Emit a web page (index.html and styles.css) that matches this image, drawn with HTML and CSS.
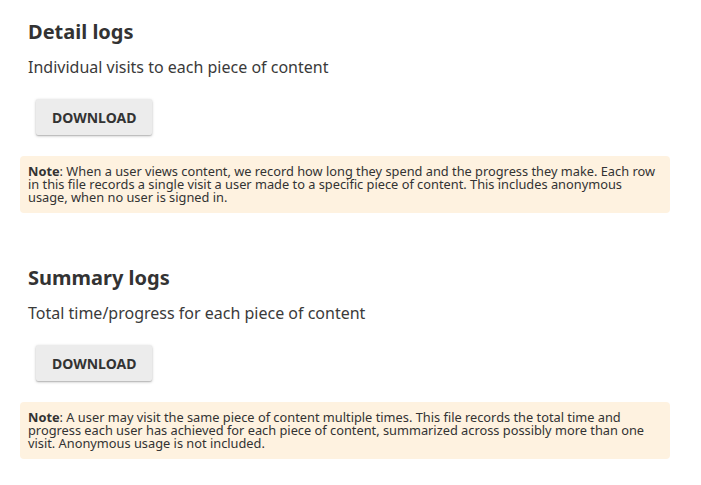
FILE: index.html
```html
<!DOCTYPE html>
<html lang="en">
<head>
<meta charset="utf-8">
<title>Logs</title>
<link rel="stylesheet" href="styles.css">
</head>
<body>
<main class="page">
  <section class="section">
    <h2 class="title">Detail logs</h2>
    <p class="subtitle">Individual visits to each piece of content</p>
    <button class="btn" type="button">Download</button>
    <p class="note"><strong>Note</strong>: When a user views content, we record how long they spend and the progress they make. Each row in this file records a single visit a user made to a specific piece of content. This includes anonymous usage, when no user is signed in.</p>
  </section>
  <section class="section section-second">
    <h2 class="title">Summary logs</h2>
    <p class="subtitle">Total time/progress for each piece of content</p>
    <button class="btn" type="button">Download</button>
    <p class="note"><strong>Note</strong>: A user may visit the same piece of content multiple times. This file records the total time and progress each user has achieved for each piece of content, summarized across possibly more than one visit. Anonymous usage is not included.</p>
  </section>
</main>
</body>
</html>
```
FILE: styles.css
```css
html, body {
  margin: 0;
  padding: 0;
  background: #ffffff;
}

body {
  font-family: "Noto Sans", "Open Sans", sans-serif;
  color: #3a3a3a;
}

.page {
  padding: 20px 31px 0 20px;
}

.section {
  display: flex;
  flex-direction: column;
  align-items: flex-start;
}

.section-second {
  margin-top: 53px;
}

.title {
  margin: 0 0 0 8px;
  font-size: 20px;
  line-height: 24px;
  font-weight: 700;
  color: #333333;
}

.subtitle {
  margin: 11px 0 0 8px;
  font-size: 16px;
  line-height: 24px;
}

.btn {
  margin: 20px 0 0 16px;
  height: 36px;
  padding: 0 16px;
  border: none;
  border-radius: 2px;
  background: #ececec;
  color: #333333;
  font-family: inherit;
  font-size: 14px;
  font-weight: 700;
  text-transform: uppercase;
  box-shadow: 0 1px 3px rgba(0, 0, 0, 0.25), 0 1px 1px rgba(0, 0, 0, 0.12);
}

.note {
  align-self: stretch;
  margin: 21px 0 0 0;
  padding: 9px 8px;
  background: #fef2e0;
  border-radius: 4px;
  font-size: 12.8px;
  line-height: 13px;
  color: #333333;
}

.note strong {
  font-weight: 700;
}
```
